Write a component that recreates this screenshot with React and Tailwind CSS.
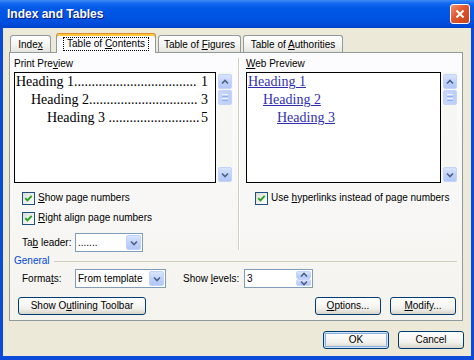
import React from 'react'

// Windows XP "Index and Tables" dialog

function Chevron({ dir = 'down' }) {
  const d = dir === 'down' ? 'M1 1.5 L4 4.5 L7 1.5' : 'M1 4.5 L4 1.5 L7 4.5'
  return (
    <svg width="8" height="6" viewBox="0 0 8 6">
      <path d={d} stroke="#4D6185" strokeWidth="1.6" fill="none" />
    </svg>
  )
}

function BlueBtn({ dir, className = '' }) {
  return (
    <div
      className={`flex items-center justify-center rounded-[2px] border border-[#C3D3FD] bg-[linear-gradient(to_bottom,#D9E4FE,#BFD1FA_55%,#B2C7F6)] ${className}`}
    >
      {dir && <Chevron dir={dir} />}
    </div>
  )
}

function Thumb() {
  return (
    <div className="h-[15px] mt-[1px] flex flex-col items-center justify-center gap-[1px] rounded-[2px] border border-[#C3D3FD] bg-[linear-gradient(to_right,#C8D6FB,#BCCEF9)]">
      <span className="w-[6px] h-px bg-[#EEF4FE]" />
      <span className="w-[6px] h-px bg-[#8CB0F8]" />
      <span className="w-[6px] h-px bg-[#EEF4FE]" />
      <span className="w-[6px] h-px bg-[#8CB0F8]" />
    </div>
  )
}

function VScroll() {
  return (
    <div className="w-[14px] h-full bg-[#F6F6F2] flex flex-col pt-[2px] pb-[1px]">
      <BlueBtn dir="up" className="h-[15px]" />
      <Thumb />
      <div className="flex-1" />
      <BlueBtn dir="down" className="h-[15px]" />
    </div>
  )
}

function Check() {
  return (
    <span className="w-[13px] h-[13px] shrink-0 border border-[#1C5180] bg-[linear-gradient(135deg,#DCDCD7,#FFFFFF)] flex items-center justify-center">
      <svg width="9" height="9" viewBox="0 0 9 9">
        <path d="M1.3 4.2 L3.4 6.4 L7.7 1.8" stroke="#21A121" strokeWidth="1.8" fill="none" />
      </svg>
    </span>
  )
}

function Button({ children, className = '', primary = false }) {
  return (
    <div
      className={`h-[18px] flex items-center justify-center rounded-[3px] border border-[#003C74] bg-[linear-gradient(to_bottom,#FFFFFF,#F2F1EC_65%,#D9D4C9)] ${
        primary ? 'shadow-[inset_0_0_0_1px_#CEE7FF,inset_0_0_0_2px_#89ADE4]' : ''
      } ${className}`}
    >
      <span className="whitespace-nowrap">{children}</span>
    </div>
  )
}

function Combo({ className = '', children }) {
  return (
    <div className={`h-[19px] shrink-0 border border-[#7F9DB9] bg-white flex items-center pl-[2px] pr-px ${className}`}>
      <span className="flex-1 whitespace-nowrap">{children}</span>
      <BlueBtn dir="down" className="w-[15px] h-[15px]" />
    </div>
  )
}

function TocLine({ text, num, dots, indent }) {
  return (
    <div className={`h-[18px] flex items-center whitespace-pre ${indent}`}>
      <span>{text}</span>
      <span>{'.'.repeat(dots)}</span>
      <span className="ml-auto">{num}</span>
    </div>
  )
}

function Tab({ children, className = '', selected = false }) {
  if (selected) {
    return (
      <div
        className={`relative z-10 -mb-px h-[20px] flex items-center justify-center rounded-t-[3px] border-x border-[#919B9C] bg-[#FCFCFE] shadow-[inset_0_1px_0_#E68B2C,inset_0_3px_0_#FFC73C] ${className}`}
      >
        <span className="px-[3px] py-[1px] mt-[2px] whitespace-nowrap border border-dotted border-black">{children}</span>
      </div>
    )
  }
  return (
    <div
      className={`h-[17px] pt-[1px] flex items-center justify-center rounded-t-[3px] border-x border-t border-[#919B9C] bg-[linear-gradient(to_bottom,#FFFFFF,#F3F3EF_60%,#E6E5DE)] ${className}`}
    >
      <span className="whitespace-nowrap">{children}</span>
    </div>
  )
}

export default function App() {
  return (
    <div className="w-[474px] h-[360px] bg-[#0A4BDA] flex flex-col overflow-hidden font-['Liberation_Sans',sans-serif] text-[10px] leading-none text-black">
      {/* Title bar */}
      <div className="h-[28px] shrink-0 flex items-center justify-between pl-[7px] pr-[4px] bg-[linear-gradient(to_bottom,#3D8CF7_0%,#1468EE_12%,#0058E6_30%,#0055E3_60%,#004CDA_85%,#0043CC_100%)]">
        <span className="text-white font-bold text-[12px] [text-shadow:1px_1px_#0A1883]">Index and Tables</span>
        <div className="w-[20px] h-[20px] rounded-[3px] border border-white bg-[linear-gradient(135deg,#F0936F,#E0552D_45%,#C8431B)] flex items-center justify-center">
          <svg width="10" height="10" viewBox="0 0 10 10">
            <path d="M1.5 1.5 L8.5 8.5 M8.5 1.5 L1.5 8.5" stroke="white" strokeWidth="2" />
          </svg>
        </div>
      </div>

      {/* Client area */}
      <div className="flex-1 ml-[3px] mr-[3px] mb-[4px] bg-[#ECE9D8] flex flex-col pt-[5px]">
        {/* Tabs */}
        <div className="h-[19px] ml-[6px] flex items-end">
          <Tab className="ml-px w-[41px]">
            Inde<u>x</u>
          </Tab>
          <Tab selected className="ml-[5px] w-[100px]">
            Table of <u>C</u>ontents
          </Tab>
          <Tab className="ml-[2px] w-[83px]">
            Table of <u>F</u>igures
          </Tab>
          <Tab className="ml-[2px] w-[100px]">
            Table of <u>A</u>uthorities
          </Tab>
        </div>

        {/* Panel */}
        <div className="ml-[6px] mr-[8px] border border-[#919B9C] bg-[linear-gradient(to_bottom,#FCFCFE,#F4F3EE)] pl-[4px] pt-[3px] pb-[5px]">
          <div className="flex">
            {/* Print preview */}
            <div className="w-[218px]">
              <div className="h-[16px] flex items-center">
                <span>
                  Print Pre<u>v</u>iew
                </span>
              </div>
              <div className="h-[111px] flex gap-[2px]">
                <div className="w-[202px] h-full border border-black bg-white pl-px pr-[7px] font-['Liberation_Serif',serif] text-[14px]">
                  <TocLine text="Heading 1" num="1" dots={35} indent="" />
                  <TocLine text="Heading 2" num="3" dots={31} indent="pl-[15px]" />
                  <TocLine text="Heading 3 " num="5" dots={26} indent="pl-[31px]" />
                </div>
                <VScroll />
              </div>
              <div className="mt-[8px] h-[14px] pl-[8px] flex items-center gap-[3px]">
                <Check />
                <span className="whitespace-nowrap">
                  <u>S</u>how page numbers
                </span>
              </div>
              <div className="mt-[6px] h-[14px] pl-[8px] flex items-center gap-[3px]">
                <Check />
                <span className="whitespace-nowrap">
                  <u>R</u>ight align page numbers
                </span>
              </div>
              <div className="mt-[8px] h-[19px] pl-[8px] flex items-center">
                <span className="w-[53px] shrink-0 whitespace-nowrap">
                  Ta<u>b</u> leader:
                </span>
                <Combo className="w-[68px]">.......</Combo>
              </div>
            </div>

            {/* Separator */}
            <div className="ml-[6px] mt-[2px] w-[2px] h-[192px] border-l border-r border-l-[#D0D0BF] border-r-white" />

            {/* Web preview */}
            <div className="ml-[6px] w-[212px]">
              <div className="h-[16px] flex items-center">
                <span>
                  <u>W</u>eb Preview
                </span>
              </div>
              <div className="h-[111px] flex gap-[2px]">
                <div className="w-[195px] h-full border border-black bg-white pl-px font-['Liberation_Serif',serif] text-[14px] text-[#2F2FB4]">
                  <div className="h-[18px] flex items-center">
                    <span className="underline">Heading 1</span>
                  </div>
                  <div className="h-[18px] flex items-center pl-[15px]">
                    <span className="underline">Heading 2</span>
                  </div>
                  <div className="h-[18px] flex items-center pl-[29px]">
                    <span className="underline">Heading 3</span>
                  </div>
                </div>
                <VScroll />
              </div>
              <div className="mt-[8px] h-[14px] pl-[9px] flex items-center gap-[3px]">
                <Check />
                <span className="whitespace-nowrap">
                  Use <u>h</u>yperlinks instead of page numbers
                </span>
              </div>
            </div>
          </div>

          {/* General */}
          <div className="mt-[2px] h-[14px] flex items-center pr-[5px]">
            <span className="text-[#0046D5]">General</span>
            <span className="flex-1 ml-[4px] h-px bg-[#D0D0BF]" />
          </div>

          <div className="mt-px h-[19px] pl-[8px] flex items-center">
            <span className="w-[53px] shrink-0 whitespace-nowrap">
              Forma<u>t</u>s:
            </span>
            <Combo className="w-[91px]">From template</Combo>
            <span className="ml-[17px] w-[61px] shrink-0 whitespace-nowrap">
              Show <u>l</u>evels:
            </span>
            <div className="w-[69px] h-[19px] shrink-0 border border-[#7F9DB9] bg-white flex items-center pl-[2px] pr-px">
              <span className="flex-1">3</span>
              <div className="w-[15px] h-[15px] flex flex-col">
                <BlueBtn dir="up" className="h-[8px]" />
                <BlueBtn dir="down" className="h-[7px]" />
              </div>
            </div>
          </div>

          <div className="mt-[9px] flex items-center pr-[6px]">
            <Button className="ml-[4px] w-[128px]">
              Show O<u>u</u>tlining Toolbar
            </Button>
            <div className="flex-1" />
            <Button className="w-[66px]">
              <u>O</u>ptions...
            </Button>
            <Button className="ml-[9px] w-[66px]">
              <u>M</u>odify...
            </Button>
          </div>
        </div>

        {/* Footer */}
        <div className="mt-[10px] mr-[7px] flex justify-end gap-[9px]">
          <Button primary className="w-[66px]">
            OK
          </Button>
          <Button className="w-[66px]">Cancel</Button>
        </div>
      </div>
    </div>
  )
}
